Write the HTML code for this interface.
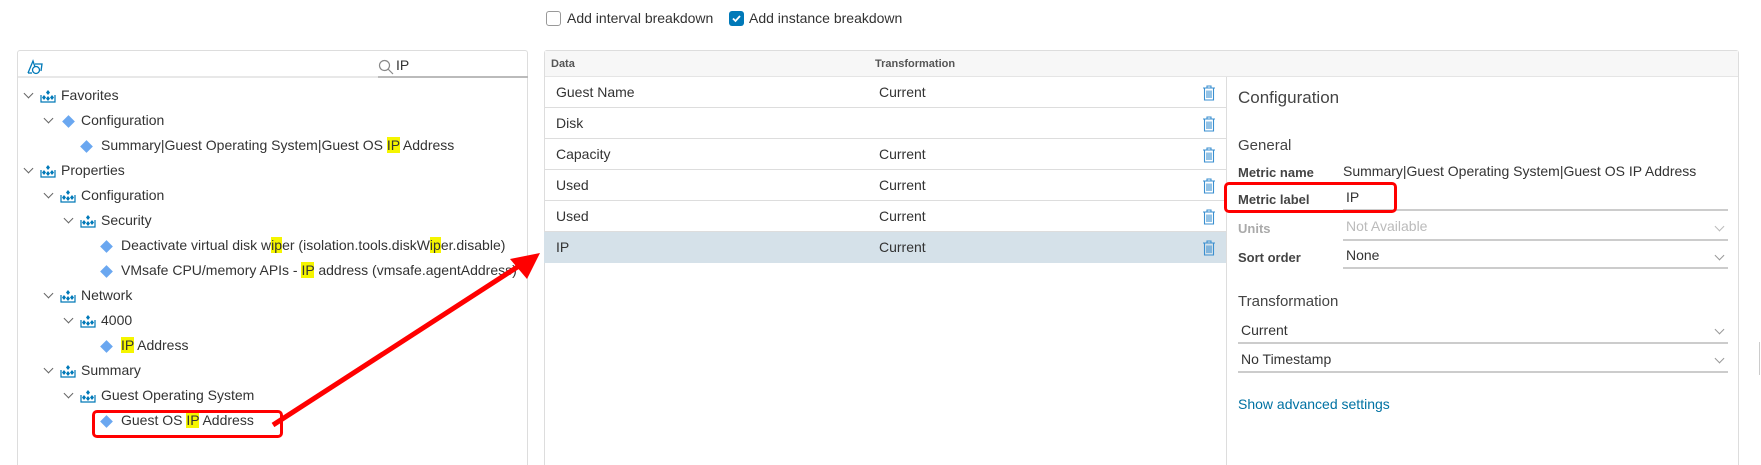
<!DOCTYPE html>
<html><head><meta charset="utf-8"><style>
*{margin:0;padding:0;box-sizing:border-box}
html,body{width:1761px;height:465px;overflow:hidden}
body{background:#fff;font-family:"Liberation Sans",sans-serif;color:#333;position:relative;font-size:14px}
.a{position:absolute;white-space:nowrap}
.hl{background:#f5f500}
.chev{position:absolute;width:7px;height:7px;border-right:1.3px solid #666;border-bottom:1.3px solid #666;transform:rotate(45deg)}
.dia{position:absolute;width:9px;height:9px;background:#6aa7f0;transform:rotate(45deg)}
.row{position:absolute;left:544px;width:682px;height:31px;border-bottom:1px solid #ddd}
.row span{position:absolute;top:7px}
.ul{position:absolute;height:2px;background:#ccc}
.dd{position:absolute;width:7px;height:7px;border-right:1.2px solid #999;border-bottom:1.2px solid #999;transform:rotate(45deg)}
.lbl{position:absolute;font-weight:bold;font-size:13px;color:#444}
</style></head><body>

<div class="a" style="left:546px;top:11px;width:15px;height:15px;border:1.3px solid #999;border-radius:3px"></div>
<div class="a" style="left:567px;top:10px;font-size:14px">Add interval breakdown</div>
<div class="a" style="left:729px;top:11px;width:15px;height:15px;background:#0079b8;border-radius:3px"></div>
<svg class="a" style="left:729px;top:11px" width="15" height="15"><path d="M4 7.5 L6.5 10 L11 5" stroke="#fff" stroke-width="1.8" fill="none"/></svg>
<div class="a" style="left:749px;top:10px;font-size:14px">Add instance breakdown</div>

<div class="a" style="left:17px;top:50px;width:511px;height:415px;border:1px solid #ddd;border-bottom:none;border-radius:3px 3px 0 0"></div>
<div class="a" style="left:18px;top:76px;width:509px;height:2px;background:#e8e8e8"></div>
<svg class="a" style="left:26px;top:59px" width="18" height="16"><path d="M2 14 L7 2 L9 8" stroke="#0079b8" stroke-width="1.3" fill="none"/><path d="M2 14 L6 14" stroke="#0079b8" stroke-width="1.3"/><circle cx="10" cy="11" r="3.5" stroke="#0079b8" stroke-width="1.3" fill="none"/><path d="M9 5 L16 5 L15 12" stroke="#0079b8" stroke-width="1.3" fill="none"/></svg>
<svg class="a" style="left:378px;top:59px" width="16" height="16"><circle cx="6.5" cy="6.5" r="5" stroke="#888" stroke-width="1.2" fill="none"/><path d="M10 10 L15 15" stroke="#888" stroke-width="1.2"/></svg>
<div class="a" style="left:396px;top:57px;font-size:14px">IP</div>
<div class="a" style="left:378px;top:76px;width:150px;height:2px;background:#bbb"></div>

<div id="tree"></div>

<div class="a" style="left:544px;top:50px;width:1195px;height:415px;border:1px solid #ddd;border-bottom:none;border-radius:3px 3px 0 0"></div>
<div class="a" style="left:545px;top:51px;width:1193px;height:26px;background:#f7f7f7;border-bottom:1px solid #e5e5e5"></div>
<div class="a" style="left:551px;top:58px;font-size:11px;font-weight:bold;color:#555">Data</div>
<div class="a" style="left:875px;top:58px;font-size:11px;font-weight:bold;color:#555">Transformation</div>
<div class="a" style="left:1226px;top:77px;width:1px;height:388px;background:#ddd"></div>

<div class="row" style="top:77px"><span style="left:12px">Guest Name</span><span style="left:335px">Current</span></div>
<div class="row" style="top:108px"><span style="left:12px">Disk</span></div>
<div class="row" style="top:139px"><span style="left:12px">Capacity</span><span style="left:335px">Current</span></div>
<div class="row" style="top:170px"><span style="left:12px">Used</span><span style="left:335px">Current</span></div>
<div class="row" style="top:201px"><span style="left:12px">Used</span><span style="left:335px">Current</span></div>
<div class="row" style="top:232px;background:#d5e1e9;border-bottom:none"><span style="left:12px">IP</span><span style="left:335px">Current</span></div>
<div id="trash"></div>

<div class="a" style="left:1238px;top:88px;font-size:17px;color:#444">Configuration</div>
<div class="a" style="left:1238px;top:137px;font-size:15px;color:#444">General</div>
<div class="lbl" style="left:1238px;top:165px">Metric name</div>
<div class="a" style="left:1343px;top:163px">Summary|Guest Operating System|Guest OS IP Address</div>
<div class="lbl" style="left:1238px;top:192px">Metric label</div>
<div class="a" style="left:1346px;top:189px">IP</div>
<div class="ul" style="left:1343px;top:209px;width:385px"></div>
<div class="lbl" style="left:1238px;top:221px;color:#aaa">Units</div>
<div class="a" style="left:1346px;top:218px;color:#bbb">Not Available</div>
<div class="ul" style="left:1343px;top:239px;width:385px"></div>
<div class="dd" style="left:1716px;top:223px;border-color:#bbb"></div>
<div class="lbl" style="left:1238px;top:250px">Sort order</div>
<div class="a" style="left:1346px;top:247px">None</div>
<div class="ul" style="left:1343px;top:267px;width:385px"></div>
<div class="dd" style="left:1716px;top:252px"></div>
<div class="a" style="left:1238px;top:293px;font-size:15px;color:#444">Transformation</div>
<div class="a" style="left:1241px;top:322px">Current</div>
<div class="ul" style="left:1238px;top:342px;width:490px"></div>
<div class="dd" style="left:1716px;top:326px"></div>
<div class="a" style="left:1241px;top:351px">No Timestamp</div>
<div class="ul" style="left:1238px;top:371px;width:490px"></div>
<div class="dd" style="left:1716px;top:355px"></div>
<div class="a" style="left:1238px;top:396px;color:#0072a3;font-size:14px">Show advanced settings</div>
<div class="a" style="left:1759px;top:342px;width:1px;height:33px;background:#ccc"></div>

<div class="a" style="left:92px;top:410px;width:191px;height:28px;border:3px solid #f00;border-radius:5px"></div>
<div class="a" style="left:1224px;top:182px;width:173px;height:31px;border:3px solid #f00;border-radius:5px"></div>
<svg class="a" style="left:0;top:0" width="1761" height="465"><path d="M273 425 L522 264" stroke="#f00" stroke-width="5"/><path d="M540 253 L510 259 L527 279 Z" fill="#f00"/></svg>

<script>
var t=[
[0,'Favorites','h'],[1,'Configuration','d'],[2,'Summary|Guest Operating System|Guest OS <span class=hl>IP</span> Address','l'],
[0,'Properties','h'],[1,'Configuration','h'],[2,'Security','h'],
[3,'Deactivate virtual disk w<span class=hl>ip</span>er (isolation.tools.diskW<span class=hl>ip</span>er.disable)','l'],
[3,'VMsafe CPU/memory APIs - <span class=hl>IP</span> address (vmsafe.agentAddress)','l'],
[1,'Network','h'],[2,'4000','h'],[3,'<span class=hl>IP</span> Address','l'],
[1,'Summary','h'],[2,'Guest Operating System','h'],[3,'Guest OS <span class=hl>IP</span> Address','l']];
var h='';
t.forEach(function(r,i){var y=96+i*25,L=r[0],x=L*20;
if(r[2]=='l'){h+='<div class="dia" style="left:'+(x+42)+'px;top:'+(y-4)+'px"></div><div class="a" style="left:'+(x+61)+'px;top:'+(y-9)+'px;width:'+(522-(x+61))+'px;overflow:hidden">'+r[1]+'</div>';}
else{h+='<div class="chev" style="left:'+(x+25)+'px;top:'+(y-6)+'px"></div>';
if(r[2]=='d')h+='<div class="dia" style="left:'+(x+44)+'px;top:'+(y-4)+'px"></div>';
else h+='<svg class="a" style="left:'+(x+40)+'px;top:'+(y-7)+'px" width="16" height="14"><path d="M1 6 V13 H15 V6" stroke="#0079b8" stroke-width="1.2" fill="none"/><path d="M8 1 L10 3.5 L8 6 L6 3.5Z M4 6 L6 8.5 L4 11 L2 8.5Z M12 6 L14 8.5 L12 11 L10 8.5Z M8 7 L10 9.5 L8 12 L6 9.5Z" fill="#0079b8"/></svg>';
h+='<div class="a" style="left:'+(x+61)+'px;top:'+(y-9)+'px">'+r[1]+'</div>';}
});
document.getElementById('tree').innerHTML=h;
var s='';for(var i=0;i<6;i++){var y=85+i*31;s+='<svg class="a" style="left:1202px;top:'+y+'px" width="14" height="16"><path d="M1 3 H13 M5 3 V1 H9 V3 M2.5 3 V15 H11.5 V3 M5 5.5 V13 M7 5.5 V13 M9 5.5 V13" stroke="#3a8fd0" stroke-width="1.1" fill="none"/></svg>';}
document.getElementById('trash').innerHTML=s;
</script>
</body></html>
